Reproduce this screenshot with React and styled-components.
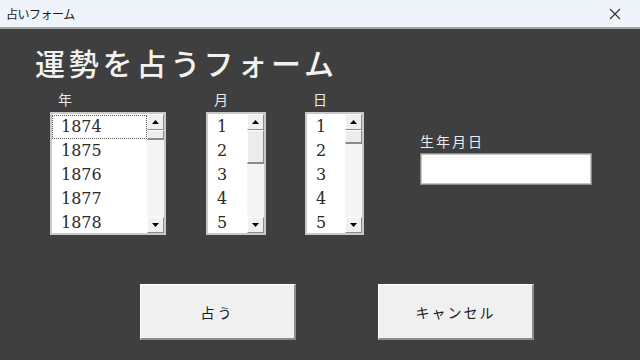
import styled, { createGlobalStyle } from 'styled-components';

const GlobalStyle = createGlobalStyle`
  html, body {
    margin: 0;
    padding: 0;
    background: #3f3f3f;
  }
  body {
    font-family: "Noto Sans CJK JP", "Noto Sans", sans-serif;
  }
`;

const lists = [
  { label: '年', items: ['1874', '1875', '1876', '1877', '1878'], width: 116, thumbHeight: 10, gap: 0 },
  { label: '月', items: ['1', '2', '3', '4', '5'], width: 60, thumbHeight: 34, gap: 40 },
  { label: '日', items: ['1', '2', '3', '4', '5'], width: 59, thumbHeight: 14, gap: 39 },
];

const App = () => {
  return (
    <Window>
      <GlobalStyle />
      <TitleBar>
        <TitleText>占いフォーム</TitleText>
        <CloseBtn>
          <svg width='12' height='12' viewBox='0 0 12 12'>
            <path d='M1 1 L11 11 M11 1 L1 11' stroke='#333' strokeWidth='1.2' fill='none' />
          </svg>
        </CloseBtn>
      </TitleBar>
      <Body>
        <Heading>運勢を占うフォーム</Heading>
        <FieldRow>
          {lists.map((list, i) => (
            <ListGroup key={i} gap={list.gap}>
              <Label>{list.label}</Label>
              <ListBox width={list.width}>
                <Items>
                  {list.items.map((item, j) => (
                    <Item key={j} selected={i === 0 && j === 0}>
                      {item}
                    </Item>
                  ))}
                </Items>
                <ScrollBar>
                  <ArrowBtn>
                    <svg width='7' height='4' viewBox='0 0 7 4'>
                      <path d='M3.5 0 L7 4 L0 4 Z' fill='#000' />
                    </svg>
                  </ArrowBtn>
                  <Track>
                    <Thumb style={{ height: list.thumbHeight }} />
                  </Track>
                  <ArrowBtn>
                    <svg width='7' height='4' viewBox='0 0 7 4'>
                      <path d='M0 0 L7 0 L3.5 4 Z' fill='#000' />
                    </svg>
                  </ArrowBtn>
                </ScrollBar>
              </ListBox>
            </ListGroup>
          ))}
          <DateGroup>
            <DateLabel>生年月日</DateLabel>
            <TextBox />
          </DateGroup>
        </FieldRow>
        <ButtonRow>
          <Button>占う</Button>
          <Button wide>キャンセル</Button>
        </ButtonRow>
      </Body>
    </Window>
  );
};

const Window = styled.div`
  width: 640px;
  height: 360px;
  overflow: hidden;
  background: #3f3f3f;
`;

const TitleBar = styled.div`
  height: 27px;
  background: #eff3fa;
  border-bottom: 2px solid #a3a3a3;
  display: flex;
  align-items: center;
  justify-content: space-between;
  padding: 0 0 0 6px;
`;

const TitleText = styled.div`
  font-size: 12px;
  color: #1a1a1a;
  letter-spacing: -0.5px;
`;

const CloseBtn = styled.div`
  width: 46px;
  height: 27px;
  display: flex;
  align-items: center;
  justify-content: center;
  margin-right: 2px;
`;

const Body = styled.div`
  display: flex;
  flex-direction: column;
  padding: 13px 0 0 35px;
`;

const Heading = styled.div`
  font-size: 30px;
  line-height: 40px;
  color: #f2f2f2;
  letter-spacing: 3.8px;
  font-weight: 500;
`;

const FieldRow = styled.div`
  display: flex;
  align-items: flex-start;
  padding-left: 15px;
  margin-top: 9px;
`;

const ListGroup = styled.div`
  display: flex;
  flex-direction: column;
  margin-left: ${props => props.gap}px;
`;

const Label = styled.div`
  font-size: 14px;
  line-height: 16px;
  color: #ececec;
  padding-left: 8px;
  height: 21px;
`;

const ListBox = styled.div`
  width: ${props => props.width}px;
  height: 123px;
  box-sizing: border-box;
  border: 2px solid #c9c9c9;
  background: #fff;
  display: flex;
`;

const Items = styled.div`
  flex: 1;
  display: flex;
  flex-direction: column;
  padding-top: 1px;
`;

const Item = styled.div`
  height: 24px;
  line-height: 22px;
  box-sizing: border-box;
  padding-left: 8px;
  font-family: "DejaVu Serif", "Liberation Serif", serif;
  font-size: 16px;
  color: #2a2a2a;
  border: 1px dotted ${props => (props.selected ? '#555' : 'transparent')};
`;

const ScrollBar = styled.div`
  width: 17px;
  display: flex;
  flex-direction: column;
  background: #f3f3f3;
`;

const ArrowBtn = styled.div`
  height: 16px;
  box-sizing: border-box;
  background: #f0f0f0;
  border-top: 1px solid #fff;
  border-left: 1px solid #fff;
  border-right: 1px solid #8a8a8a;
  border-bottom: 1px solid #8a8a8a;
  display: flex;
  align-items: center;
  justify-content: center;
`;

const Track = styled.div`
  flex: 1;
  background: #f5f5f5;
`;

const Thumb = styled.div`
  box-sizing: border-box;
  background: #ececec;
  border-top: 1px solid #fff;
  border-left: 1px solid #fff;
  border-right: 1px solid #8a8a8a;
  border-bottom: 2px solid #8a8a8a;
`;

const DateGroup = styled.div`
  display: flex;
  flex-direction: column;
  margin-left: 56px;
  margin-top: 42px;
`;

const DateLabel = styled.div`
  font-size: 14px;
  line-height: 17px;
  height: 20px;
  color: #ececec;
  letter-spacing: 2px;
`;

const TextBox = styled.div`
  width: 172px;
  height: 32px;
  box-sizing: border-box;
  background: #fff;
  border: 2px solid #c4c4c4;
  outline: 1px solid #8a8a8a;
  outline-offset: -1px;
`;

const ButtonRow = styled.div`
  display: flex;
  gap: 82px;
  margin-top: 49px;
  padding-left: 105px;
`;

const Button = styled.div`
  width: 156px;
  height: 56px;
  box-sizing: border-box;
  background: #f0f0f0;
  border-top: 1px solid #fff;
  border-left: 1px solid #fff;
  border-right: 2px solid #8d8d8d;
  border-bottom: 2px solid #8d8d8d;
  display: flex;
  align-items: center;
  justify-content: center;
  font-size: 14px;
  color: #1a1a1a;
  letter-spacing: ${props => (props.wide ? '2px' : '3px')};
`;

export default App;
